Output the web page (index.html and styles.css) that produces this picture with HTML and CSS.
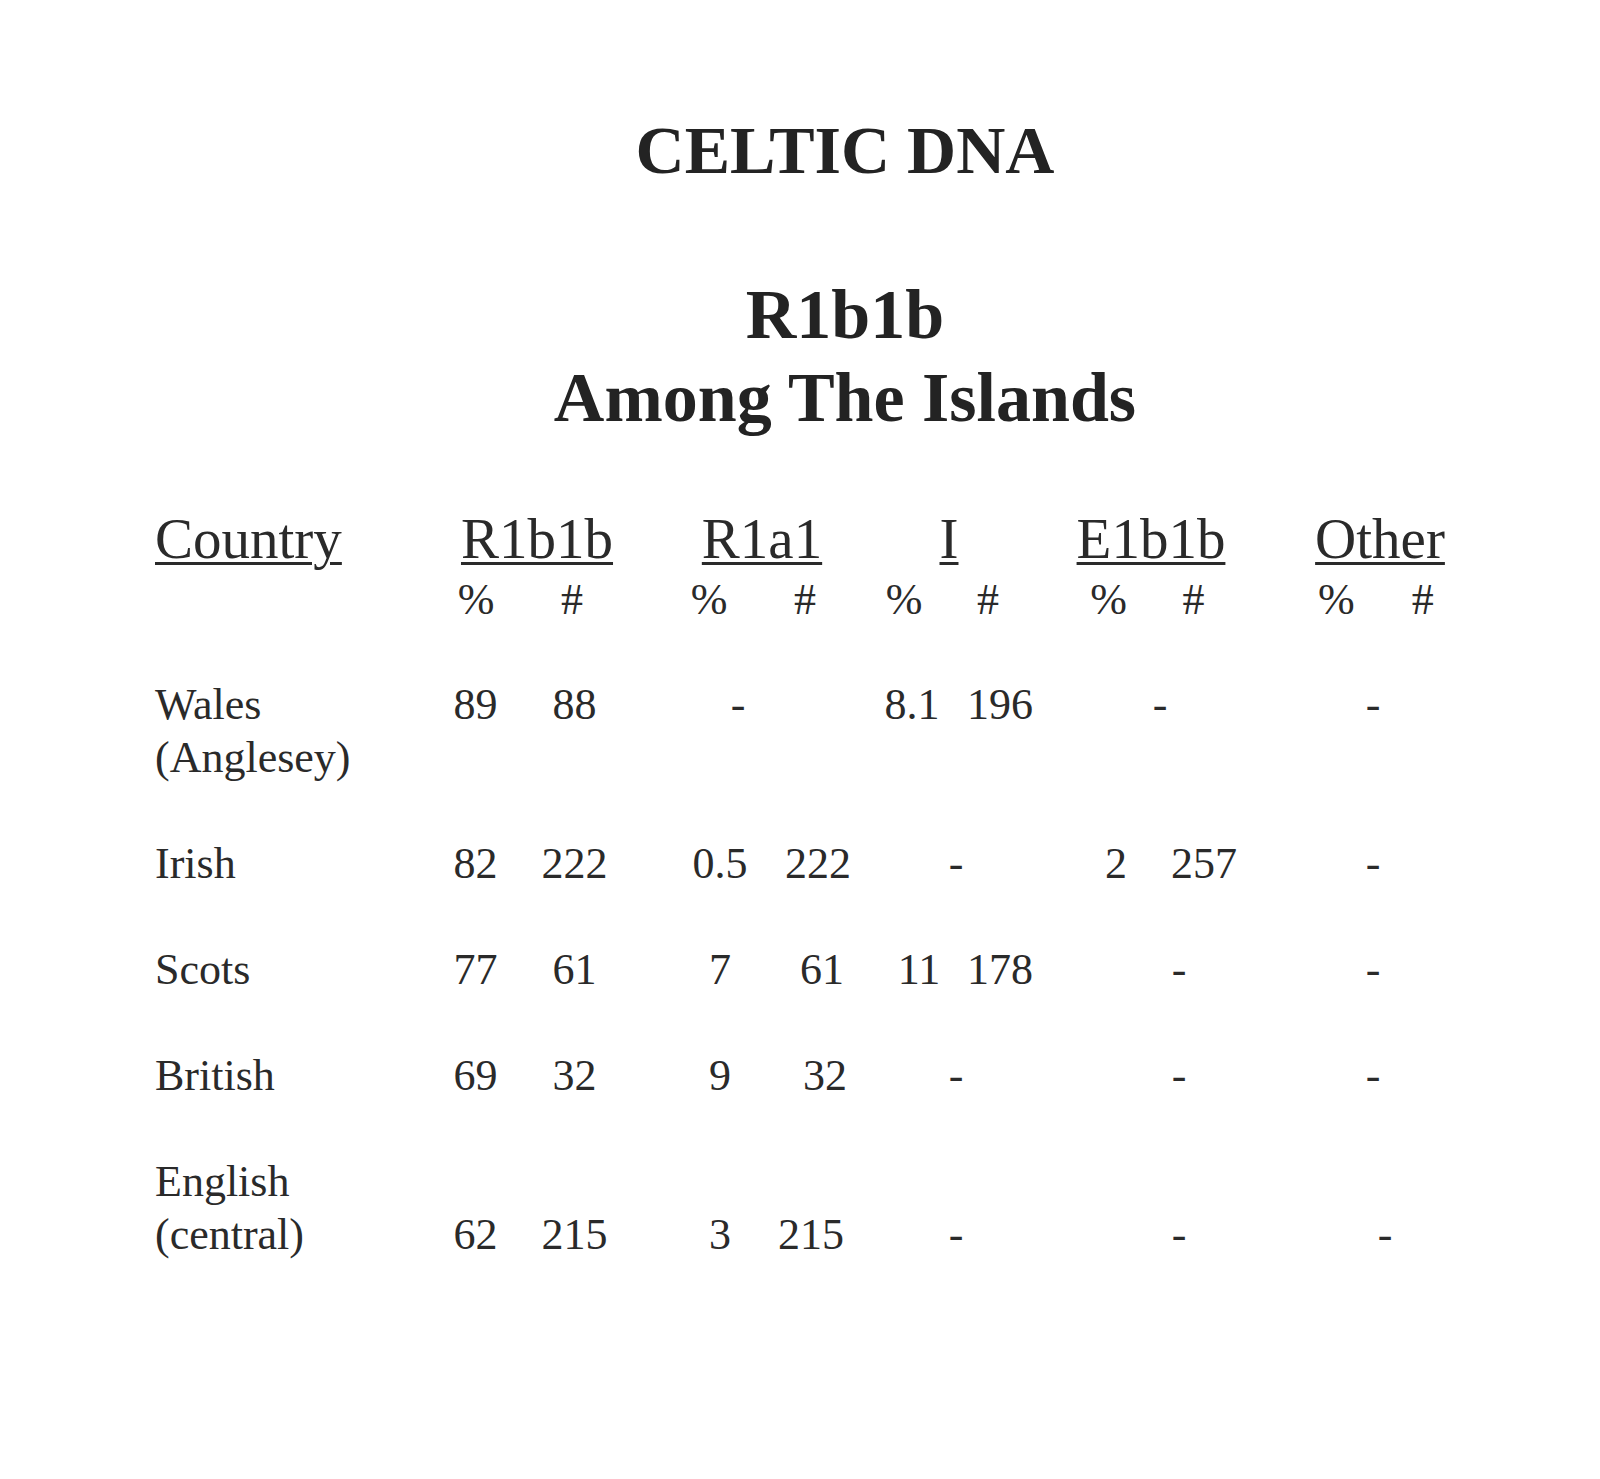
FILE: index.html
```html
<!DOCTYPE html>
<html lang="en">
<head>
<meta charset="utf-8">
<title>Celtic DNA</title>
<link rel="stylesheet" href="styles.css">
</head>
<body>
<div class="page">
  <h1 class="title">CELTIC DNA</h1>
  <h2 class="subtitle">R1b1b<br>Among The Islands</h2>

  <div class="table">
    <div class="row head">
      <div class="country"><span class="u">Country</span></div>
      <div class="grp g1"><span class="u">R1b1b</span></div>
      <div class="grp g2"><span class="u">R1a1</span></div>
      <div class="grp g3"><span class="u">I</span></div>
      <div class="grp g4"><span class="u">E1b1b</span></div>
      <div class="grp g5"><span class="u">Other</span></div>
    </div>

    <div class="row sub">
      <div class="country"></div>
      <div class="grp g1"><span>%</span><span>#</span></div>
      <div class="grp g2"><span>%</span><span>#</span></div>
      <div class="grp g3"><span>%</span><span>#</span></div>
      <div class="grp g4"><span>%</span><span>#</span></div>
      <div class="grp g5"><span>%</span><span>#</span></div>
    </div>

    <div class="row data first">
      <div class="country">Wales<br>(Anglesey)</div>
      <div class="grp g1"><span>89</span><span>88</span></div>
      <div class="grp g2"><span class="dash early">-</span></div>
      <div class="grp g3"><span>8.1</span><span>196</span></div>
      <div class="grp g4"><span class="dash">-</span></div>
      <div class="grp g5"><span class="dash left">-</span></div>
    </div>

    <div class="row data">
      <div class="country">Irish</div>
      <div class="grp g1"><span>82</span><span>222</span></div>
      <div class="grp g2"><span>0.5</span><span>222</span></div>
      <div class="grp g3"><span class="dash">-</span></div>
      <div class="grp g4"><span>2</span><span>257</span></div>
      <div class="grp g5"><span class="dash left">-</span></div>
    </div>

    <div class="row data">
      <div class="country">Scots</div>
      <div class="grp g1"><span>77</span><span>61</span></div>
      <div class="grp g2"><span>7</span><span class="nudge-rs">61</span></div>
      <div class="grp g3"><span class="nudge-r">11</span><span>178</span></div>
      <div class="grp g4"><span class="dash late">-</span></div>
      <div class="grp g5"><span class="dash left">-</span></div>
    </div>

    <div class="row data">
      <div class="country">British</div>
      <div class="grp g1"><span>69</span><span>32</span></div>
      <div class="grp g2"><span>9</span><span class="nudge-r">32</span></div>
      <div class="grp g3"><span class="dash">-</span></div>
      <div class="grp g4"><span class="dash late">-</span></div>
      <div class="grp g5"><span class="dash left">-</span></div>
    </div>

    <div class="row data bottom">
      <div class="country">English<br>(central)</div>
      <div class="grp g1"><span>62</span><span>215</span></div>
      <div class="grp g2"><span>3</span><span class="nudge-l">215</span></div>
      <div class="grp g3"><span class="dash">-</span></div>
      <div class="grp g4"><span class="dash late">-</span></div>
      <div class="grp g5"><span class="dash">-</span></div>
    </div>
  </div>
</div>
</body>
</html>
```

FILE: styles.css
```css
html, body {
  margin: 0;
  padding: 0;
  background: #ffffff;
}

body {
  font-family: "Liberation Serif", "Times New Roman", serif;
  color: #2a2a2a;
}

.page {
  width: 1600px;
  height: 1479px;
  overflow: hidden;
}

.title,
.subtitle {
  margin: 0;
  padding-left: 90px;
  text-align: center;
  font-weight: bold;
  color: #232323;
}

.title {
  margin-top: 109px;
  font-size: 68px;
  line-height: 82px;
}

.subtitle {
  margin-top: 82px;
  font-size: 70px;
  line-height: 83px;
}

.table {
  margin-top: 68px;
  padding-left: 155px;
  display: flex;
  flex-direction: column;
}

.row {
  display: grid;
  grid-template-columns: 271px 198px 243px 177px 204px 223px;
  align-items: start;
}

.grp {
  display: grid;
  grid-template-columns: 1fr 1fr;
  text-align: center;
}

.g2 { padding-left: 47px; }
.g3 { padding-left: 1px; }
.g4 { padding-left: 28px; }
.g5 { padding-left: 51px; }

/* column headings */
.head {
  font-size: 57px;
  line-height: 64px;
}

.head .grp {
  display: block;
}

.head .g1 { padding-left: 24px; }
.head .g2 { padding-right: 14px; }
.head .g3 { padding-right: 14px; }
.head .g4 { padding-right: 18px; }
.head .g5 { padding-right: 10px; }

.u {
  text-decoration: underline;
  text-decoration-thickness: 3px;
  text-underline-offset: 4px;
}

/* % / # sub headings */
.sub {
  margin-top: 2px;
  font-size: 44px;
  line-height: 53px;
  grid-template-columns: 273px 192px 233px 177px 206px 230px;
}

.sub .g1 { padding-left: 0; }
.sub .g2 { padding-left: 41px; }
.sub .g3 { padding-left: 9px; }
.sub .g4 { padding-left: 36px; }
.sub .g5 { padding-left: 57px; }

/* data rows */
.data {
  margin-top: 53px;
  font-size: 44px;
  line-height: 53px;
}

.data.first {
  margin-top: 52px;
}

.data.bottom {
  align-items: end;
}

.dash {
  grid-column: 1 / -1;
}

.dash.early {
  padding-right: 62px;
}

.dash.late {
  padding-left: 38px;
}

.dash.left {
  padding-right: 24px;
}

.nudge-r {
  padding-left: 14px;
}

.nudge-rs {
  padding-left: 8px;
}

.nudge-l {
  padding-right: 14px;
}
```
